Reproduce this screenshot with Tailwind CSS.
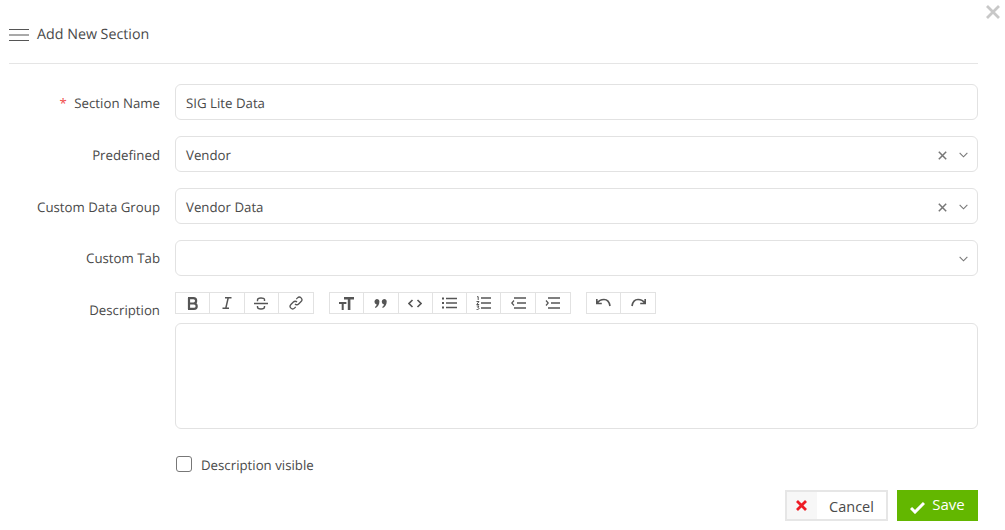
<!DOCTYPE html>
<html lang="en">

<head>
    <meta charset="UTF-8">
    <meta name="viewport" content="width=device-width, initial-scale=1.0">
    <title>Add New Section</title>
    <script src="https://cdn.jsdelivr.net/npm/@tailwindcss/browser@4"></script>
</head>

<body class="bg-white">
    <div class="relative w-[1005px] h-[530px] overflow-hidden font-['Open_Sans',sans-serif] text-[#4a4a4a] [text-rendering:geometricPrecision]">
        <!-- Close -->
        <svg class="absolute left-[986px] top-[5px] w-[14px] h-[14px] text-[#c8c8c8]" viewBox="0 0 14 14" fill="none" stroke="currentColor" stroke-width="2.8"><path d="M1 1l12 12M13 1L1 13" /></svg>

        <div class="pl-[9px] w-[978px]">
            <!-- Header -->
            <div class="flex items-center gap-2 h-[64px] pt-[7px] border-b border-[#e5e5e5]">
                <svg class="w-[20px] h-[14px] text-[#555]" viewBox="0 0 20 14" fill="none" stroke="currentColor" stroke-width="1.2"><path d="M0 1.5h20M0 7h20M0 12.5h20" /></svg>
                <h1 class="text-[14.25px] leading-none text-[#4a4a4a] pt-[1px]">Add New Section</h1>
            </div>

            <!-- Form -->
            <div class="flex items-center mt-[20px] h-[36px]">
                <label class="w-[151px] text-right text-[13.25px] pt-[4px]"><span class="text-[#f04b4b] mr-1">*</span> Section Name</label>
                <div class="ml-[15px] flex-1 h-full flex items-center px-[10px] pt-[4px] border border-[#e2e2e2] rounded-md text-[13.25px]">SIG Lite Data</div>
            </div>
            <div class="flex items-center mt-[16px] h-[36px]">
                <label class="w-[151px] text-right text-[13.25px] pt-[4px]">Predefined</label>
                <div class="ml-[15px] flex-1 h-full flex items-center pl-[10px] pr-[9.5px] pt-[2px] border border-[#e2e2e2] rounded-md text-[13.25px]">
                    <span class="flex-1 pt-[2px]">Vendor</span>
                    <svg class="w-[9px] h-[9px] text-[#777]" viewBox="0 0 9 9" fill="none" stroke="currentColor" stroke-width="1.5"><path d="M.8.8l7.4 7.4M8.2.8L.8 8.2" /></svg>
                    <svg class="ml-[11.5px] w-[9px] h-[6px] text-[#777]" viewBox="0 0 10 6" fill="none" stroke="currentColor" stroke-width="1.2"><path d="M.7.7L5 5l4.3-4.3" /></svg>
                </div>
            </div>
            <div class="flex items-center mt-[16px] h-[36px]">
                <label class="w-[151px] text-right text-[13.25px] pt-[4px]">Custom Data Group</label>
                <div class="ml-[15px] flex-1 h-full flex items-center pl-[10px] pr-[9.5px] pt-[2px] border border-[#e2e2e2] rounded-md text-[13.25px]">
                    <span class="flex-1 pt-[2px]">Vendor Data</span>
                    <svg class="w-[9px] h-[9px] text-[#777]" viewBox="0 0 9 9" fill="none" stroke="currentColor" stroke-width="1.5"><path d="M.8.8l7.4 7.4M8.2.8L.8 8.2" /></svg>
                    <svg class="ml-[11.5px] w-[9px] h-[6px] text-[#777]" viewBox="0 0 10 6" fill="none" stroke="currentColor" stroke-width="1.2"><path d="M.7.7L5 5l4.3-4.3" /></svg>
                </div>
            </div>
            <div class="flex items-center mt-[16px] h-[36px]">
                <label class="w-[151px] text-right text-[13.25px] pt-[2px]">Custom Tab</label>
                <div class="ml-[15px] flex-1 h-full flex items-center justify-end pr-[9.5px] pt-[2px] border border-[#e2e2e2] rounded-md">
                    <svg class="w-[9px] h-[6px] text-[#777]" viewBox="0 0 10 6" fill="none" stroke="currentColor" stroke-width="1.2"><path d="M.7.7L5 5l4.3-4.3" /></svg>
                </div>
            </div>

            <!-- Description -->
            <div class="flex mt-[16px]">
                <label class="w-[151px] text-right text-[13.25px] pt-[9px]">Description</label>
                <div class="ml-[15px] flex-1">
                    <div class="flex gap-[15px] h-[22px] text-[#555]">
                        <div class="flex border border-[#e2e2e2] divide-x divide-[#e2e2e2]">
                            <div class="w-[34.25px] flex items-center justify-center"><svg class="w-[12px] h-[13px]" viewBox="0 0 12 13" fill="none" stroke="currentColor" stroke-width="2.2"><path d="M2 1v11M1 1.2h5.5a2.6 2.6 0 0 1 0 5.3H2h5a2.7 2.7 0 0 1 0 5.4H1" /></svg></div>
                            <div class="w-[34.25px] flex items-center justify-center"><svg class="w-[10px] h-[12px]" viewBox="0 0 10 12" fill="none" stroke="currentColor" stroke-width="1.5"><path d="M3 .8h6.5M.5 11.2H7M6.2.8L3.8 11.2" /></svg></div>
                            <div class="w-[34.25px] flex items-center justify-center"><svg class="w-[14px] h-[13px]" viewBox="0 0 14 13" fill="none" stroke="currentColor" stroke-width="1.4"><path d="M0 6.500h14M10.500 4V2.600C10.500 1.600 9 1 7 1S3.500 1.800 3.500 3v1.200M3.500 9v1C3.500 11.200 5 12 7 12s3.500-.7 3.500-2V9" /></svg></div>
                            <div class="w-[34.25px] flex items-center justify-center"><svg class="w-[14px] h-[14px]" viewBox="0 0 14 14" fill="none" stroke="currentColor" stroke-width="1.3"><path d="M6 8a2.500 2.500 0 0 0 3.600 0l2.500-2.500a2.500 2.500 0 0 0-3.600-3.600L7.300 3.100M8 6a2.500 2.500 0 0 0-3.600 0L1.900 8.500a2.500 2.500 0 0 0 3.600 3.600l1.200-1.200" /></svg></div>
                        </div>
                        <div class="flex border border-[#e2e2e2] divide-x divide-[#e2e2e2]">
                            <div class="w-[34.3px] flex items-center justify-center"><svg class="w-[15px] h-[13px]" viewBox="0 0 15 13" fill="currentColor"><path d="M5 0h10v2.400h-3.600V13H8.800V2.400H5zM0 5h7.400v1.900H4.700V13H2.700V6.900H0z" /></svg></div>
                            <div class="w-[34.3px] flex items-center justify-center"><svg class="w-[13px] h-[9px]" viewBox="0 0 13 9" fill="currentColor"><path d="M2.700 0a2.700 2.700 0 0 1 2.700 2.800C5.400 5.600 3.800 8 1.500 9L.9 8c1-.6 1.600-1.400 1.800-2.500A2.800 2.800 0 0 1 2.700 0zM10 0a2.700 2.700 0 0 1 2.700 2.800c0 2.800-1.600 5.200-3.900 6.200L8.200 8c1-.6 1.600-1.400 1.800-2.500A2.800 2.800 0 0 1 10 0z" /></svg></div>
                            <div class="w-[34.3px] flex items-center justify-center"><svg class="w-[14px] h-[9px]" viewBox="0 0 14 9" fill="none" stroke="currentColor" stroke-width="1.6"><path d="M4.500 1L1 4.500 4.500 8M9.500 1L13 4.500 9.500 8" /></svg></div>
                            <div class="w-[34.3px] flex items-center justify-center"><svg class="w-[15px] h-[12px]" viewBox="0 0 15 12" fill="none" stroke="currentColor"><path stroke-width="1.400" d="M4 1.500h11M4 6h11M4 10.500h11" /><path stroke-width="2" d="M0 1.500h2M0 6h2M0 10.500h2" /></svg></div>
                            <div class="w-[34.3px] flex items-center justify-center"><svg class="w-[15px] h-[14px]" viewBox="0 0 15 14" fill="none" stroke="currentColor"><path stroke-width="1.400" d="M5 2h10M5 7h10M5 12h10" /><path stroke-width="1" d="M1 .7h1.200V4M.5 5.500h2.500L.7 8.500h2.500M.7 10h2.300L1.800 11.500c1.800 0 1.800 2.300-1.200 2" /></svg></div>
                            <div class="w-[34.3px] flex items-center justify-center"><svg class="w-[15px] h-[12px]" viewBox="0 0 15 12" fill="none" stroke="currentColor"><path stroke-width="1.400" d="M3 1h12M6 6h9M3 11h12" /><path stroke-width="1.200" d="M3 3.500L.8 6 3 8.500" /></svg></div>
                            <div class="w-[34.3px] flex items-center justify-center"><svg class="w-[15px] h-[12px]" viewBox="0 0 15 12" fill="none" stroke="currentColor"><path stroke-width="1.400" d="M3 1h12M6 6h9M3 11h12" /><path stroke-width="1.200" d="M1 3.500L3.200 6 1 8.500" /></svg></div>
                        </div>
                        <div class="flex border border-[#e2e2e2] divide-x divide-[#e2e2e2]">
                            <div class="w-[34px] flex items-center justify-center"><svg class="w-[15px] h-[10px]" viewBox="0 0 15 10" fill="none" stroke="currentColor" stroke-width="1.700"><path d="M.8 1v4.500h5M1 5.300C3 2.300 5.500 1.500 8 1.500c3 0 5.300 2.200 6 6.500" /></svg></div>
                            <div class="w-[34px] flex items-center justify-center"><svg class="w-[15px] h-[10px]" viewBox="0 0 15 10" fill="none" stroke="currentColor" stroke-width="1.700"><path d="M14.200 1v4.500h-5M14 5.300C12 2.300 9.500 1.500 7 1.500c-3 0-5.300 2.200-6 6.500" /></svg></div>
                        </div>
                    </div>
                    <div class="mt-[9px] h-[106px] border border-[#e2e2e2] rounded-md"></div>
                </div>
            </div>

            <!-- Visible checkbox -->
            <label class="flex items-center gap-[9px] ml-[167px] mt-[27px] h-[16px] text-[13.25px]">
                <span class="w-[16px] h-[16px] border border-[#777] rounded-[3px]"></span>
                <span class="pt-[4px]">Description visible</span>
            </label>

            <!-- Actions -->
            <div class="flex justify-end items-start gap-[9px] mt-[18px]">
                <button class="flex h-[31px] w-[103px] border-2 border-[#e6e6e6] text-[#4a4a4a]">
                    <span class="w-[30px] h-full pr-[1px] bg-[#f7f7f7] flex items-center justify-center"><svg class="w-[11px] h-[11px] text-[#ee1c25]" viewBox="0 0 11 11" fill="none" stroke="currentColor" stroke-width="2.800"><path d="M1 1l9 9M10 1l-9 9" /></svg></span>
                    <span class="flex-1 text-center text-[14.5px] leading-[30px]">Cancel</span>
                </button>
                <button class="flex items-center justify-center gap-[7px] h-[31px] w-[81px] pb-[2px] bg-[#63b700] text-white text-[15px] font-medium">
                    <svg class="w-[15px] h-[13px] mt-[6px]" viewBox="0 0 15 13" fill="none" stroke="currentColor" stroke-width="3"><path d="M1 7l4 4L14 2" /></svg>
                    Save
                </button>
            </div>
        </div>
    </div>
</body>

</html>
